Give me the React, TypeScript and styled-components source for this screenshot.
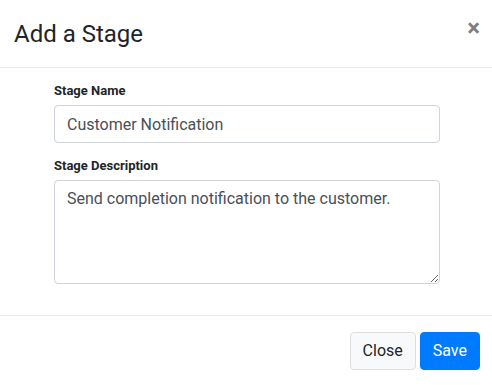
import React, { useState } from "react";
import styled, { createGlobalStyle } from "styled-components";

const GlobalStyle = createGlobalStyle`
  * {
    box-sizing: border-box;
  }
  body {
    margin: 0;
    background: #fff;
    font-family: Roboto, "Liberation Sans", Arial, sans-serif;
    color: #212529;
  }
`;

const Modal = styled.div`
  width: 492px;
  height: 385px;
  display: flex;
  flex-direction: column;
  background: #fff;
`;

const Header = styled.div`
  display: flex;
  align-items: center;
  justify-content: space-between;
  padding: 16px 12px 15px 14px;
  border-bottom: 1px solid #e9ecef;
`;

const Title = styled.h5`
  margin: 0;
  font-size: 24px;
  font-weight: 400;
  line-height: 36px;
  color: #212529;
`;

const CloseX = styled.button`
  border: 0;
  background: transparent;
  padding: 0;
  margin-top: -12px;
  font-family: Roboto, "Liberation Sans", Arial, sans-serif;
  font-size: 24px;
  font-weight: 700;
  line-height: 1;
  color: #000;
  opacity: 0.5;
  cursor: pointer;
`;

const Body = styled.div`
  flex: 1;
  padding: 16px 52px 0 54px;
  border-bottom: 1px solid #e9ecef;
`;

const Group = styled.div`
  margin-bottom: 16px;
`;

const Label = styled.label`
  display: block;
  font-size: 13px;
  font-weight: 700;
  line-height: 13px;
  margin-bottom: 8px;
  color: #212529;
`;

const fieldCss = `
  display: block;
  width: 100%;
  padding: 6px 12px;
  font-family: Roboto, "Liberation Sans", Arial, sans-serif;
  font-size: 16px;
  line-height: 24px;
  color: #495057;
  background: #fff;
  border: 1px solid #ced4da;
  border-radius: 4px;
  outline: none;
`;

const Input = styled.input`
  ${fieldCss}
  height: 38px;
`;

const TextArea = styled.textarea`
  ${fieldCss}
  height: 104px;
  resize: vertical;
`;

const Footer = styled.div`
  display: flex;
  justify-content: flex-end;
  gap: 4px;
  padding: 16px 12px 15px;
`;

const Button = styled.button<{ $primary?: boolean }>`
  height: 38px;
  padding: 6px 12px;
  font-family: Roboto, "Liberation Sans", Arial, sans-serif;
  font-size: 16px;
  line-height: 24px;
  border-radius: 4px;
  cursor: pointer;
  border: 1px solid ${(p) => (p.$primary ? "#007bff" : "#dcdfe2")};
  background: ${(p) => (p.$primary ? "#007bff" : "#f8f9fa")};
  color: ${(p) => (p.$primary ? "#fff" : "#212529")};
`;

export default function App() {
  const [name, setName] = useState("Customer Notification");
  const [desc, setDesc] = useState(
    "Send completion notification to the customer."
  );

  return (
    <>
      <GlobalStyle />
      <Modal>
        <Header>
          <Title>Add a Stage</Title>
          <CloseX aria-label="Close">×</CloseX>
        </Header>
        <Body>
          <Group>
            <Label>Stage Name</Label>
            <Input value={name} onChange={(e) => setName(e.target.value)} />
          </Group>
          <Group>
            <Label>Stage Description</Label>
            <TextArea value={desc} onChange={(e) => setDesc(e.target.value)} />
          </Group>
        </Body>
        <Footer>
          <Button>Close</Button>
          <Button $primary>Save</Button>
        </Footer>
      </Modal>
    </>
  );
}
